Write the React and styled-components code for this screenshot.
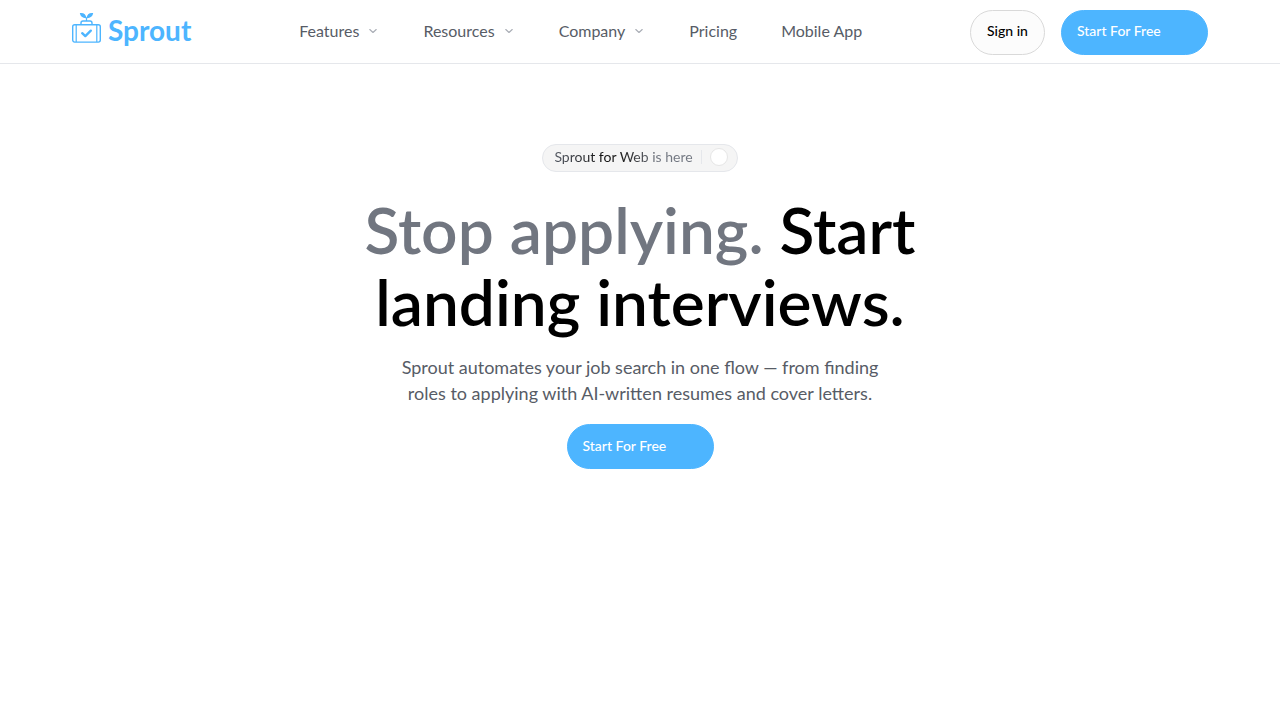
import React from 'react';

import styled, { createGlobalStyle, ThemeProvider } from 'styled-components';

const theme = {
  colors: {
    brand: '#4db5ff',
    black: '#000000',
    grayBase: '#575c66',
    grayHeading: '#717680',
    grayIcon: '#a9adb5',
    line: '#e5e7eb',
    badge: '#f5f5f5',
  },
};

const GlobalStyle = createGlobalStyle`
  * {
    box-sizing: border-box;
  }

  body {
    margin: 0;
    background: #ffffff;
    font-family: Lato, "Open Sans", sans-serif;
  }
  `;

const Header = styled.header`
  border-bottom: 1px solid ${(props) => props.theme.colors.line};
  `;

const HeaderContent = styled.div`
  display: flex;
  height: 63px;
  max-width: 1280px;
  margin: 0 auto;
  padding: 1px 72px 0;
  justify-content: space-between;
  align-items: center;
  `;

const LogoLink = styled.a`
  display: flex;
  align-items: center;
  gap: 7px;
  padding-bottom: 4px;
  color: ${(props) => props.theme.colors.brand};
  font-size: 28px;
  font-weight: 700;
  line-height: 36px;
  text-decoration: none;
  `;

const LogoIcon = styled.svg`
  display: block;
  width: 29px;
  height: 40px;
  `;

const Nav = styled.nav`
  display: flex;
  align-items: center;
  gap: 44px;
  padding-bottom: 2px;
  `;

const NavLink = styled.a`
  display: flex;
  align-items: center;
  gap: 8px;
  color: ${(props) => props.theme.colors.grayBase};
  font-size: 16px;
  line-height: 24px;
  text-decoration: none;
  `;

const ChevronIcon = styled.svg`
  display: block;
  width: 12px;
  height: 12px;
  color: ${(props) => props.theme.colors.grayIcon};
  `;

const Actions = styled.div`
  display: flex;
  align-items: center;
  gap: 16px;
  `;

const Button = styled.button`
  min-width: ${(props) => (props.$primary ? '147px' : '75px')};
  height: 45px;
  padding: 0 15px 2px;
  border: 1px solid ${(props) => (props.$primary ? props.theme.colors.brand : '#d9d9d9')};
  border-radius: 24px;
  background: ${(props) => (props.$primary ? props.theme.colors.brand : '#fcfcfc')};
  color: ${(props) => (props.$primary ? '#ffffff' : props.theme.colors.black)};
  font-family: inherit;
  font-size: 14px;
  font-weight: 500;
  line-height: 20px;
  text-align: ${(props) => (props.$primary ? 'left' : 'center')};
  cursor: pointer;
  `;

const Hero = styled.main`
  display: flex;
  flex-direction: column;
  align-items: center;
  padding: 80px 24px;
  text-align: center;
  `;

const Badge = styled.a`
  display: flex;
  align-items: center;
  gap: 8px;
  height: 28px;
  padding: 0 9px 2px 11px;
  border: 1px solid ${(props) => props.theme.colors.line};
  border-radius: 14px;
  background: ${(props) => props.theme.colors.badge};
  font-size: 14px;
  line-height: 20px;
  text-decoration: none;
  `;

const BadgeText = styled.span`
  background: linear-gradient(90deg, #575c66 0%, #111111 35%, #222222 50%, #717680 75%, #717680 100%);
  background-clip: text;
  color: transparent;
  `;

const BadgeDivider = styled.span`
  width: 1px;
  height: 14px;
  background: ${(props) => props.theme.colors.line};
  `;

const BadgeDot = styled.span`
  width: 18px;
  height: 18px;
  border: 1px solid #e6e6e6;
  border-radius: 50%;
  background: #ffffff;
  `;

const Title = styled.h1`
  max-width: 620px;
  margin: 22px 0 16px;
  color: ${(props) => props.theme.colors.black};
  font-size: 64px;
  font-weight: 600;
  line-height: 72px;
  `;

const Muted = styled.span`
  color: ${(props) => props.theme.colors.grayHeading};
  `;

const Lead = styled.p`
  max-width: 500px;
  margin: 0 0 18px;
  color: ${(props) => props.theme.colors.grayBase};
  font-size: 18px;
  line-height: 26px;
  `;

const links = [
  { label: 'Features', menu: true },
  { label: 'Resources', menu: true },
  { label: 'Company', menu: true },
  { label: 'Pricing' },
  { label: 'Mobile App' },
];

function Logo() {
  return (
    <LogoIcon viewBox="0 1 29 40" fill="none" stroke="currentColor" aria-hidden="true">
      <rect x="0.7" y="15.7" width="27.6" height="17.4" rx="2" strokeWidth="1.4" />
      <path d="M4.2 15.7v17.4M24.8 15.7v17.4" strokeWidth="1.2" />
      <path d="M9 15.5v-1.500a2 2 0 0 1 2-2h7a2 2 0 0 1 2 2v1.500" strokeWidth="1.400" />
      <path d="M14.500 12V8.500" strokeWidth="1.200" />
      <path d="M14.500 9.200c-3.800.2-6.200-1.600-6.700-5.100 3.900-.6 6.200 1.300 6.700 5.100zM14.500 9.200c3.800.2 6.200-1.600 6.700-5.100-3.900-.6-6.200 1.300-6.700 5.100z" fill="currentColor" stroke="none" />
      <path d="M10.200 24.200l3.100 2.900 5.500-5.400" strokeWidth="2.400" strokeLinecap="round" strokeLinejoin="round" />
    </LogoIcon>
  );
}

function Chevron() {
  return (
    <ChevronIcon viewBox="0 0 12 12" fill="none" stroke="currentColor" strokeWidth="1.100" aria-hidden="true">
      <path d="M2.800 4.500L6 7.500l3.200-3" strokeLinecap="round" strokeLinejoin="round" />
    </ChevronIcon>
  );
}

function App() {
  return (
    <ThemeProvider theme={theme}>
      <GlobalStyle />
      <Header>
        <HeaderContent>
          <LogoLink href="/">
            <Logo />
            Sprout
          </LogoLink>
          <Nav>
            {links.map((link) => (
              <NavLink key={link.label} href="#">
                {link.label}
                {link.menu && <Chevron />}
              </NavLink>
            ))}
          </Nav>
          <Actions>
            <Button type="button">Sign in</Button>
            <Button type="button" $primary>Start For Free</Button>
          </Actions>
        </HeaderContent>
      </Header>
      <Hero>
        <Badge href="#">
          <BadgeText>Sprout for Web is here</BadgeText>
          <BadgeDivider />
          <BadgeDot />
        </Badge>
        <Title>
          <Muted>Stop applying.</Muted> Start
          <br />
          landing interviews.
        </Title>
        <Lead>
          Sprout automates your job search in one flow — from finding
          roles to applying with AI-written resumes and cover letters.
        </Lead>
        <Button type="button" $primary>Start For Free</Button>
      </Hero>
    </ThemeProvider>
  );
}

export default App;
